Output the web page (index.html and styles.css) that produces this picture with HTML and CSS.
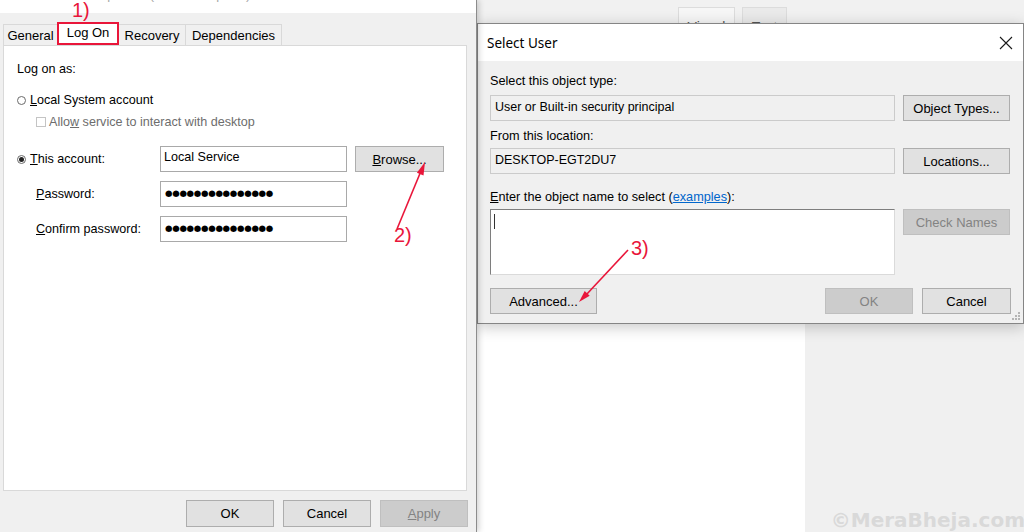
FILE: index.html
```html
<!DOCTYPE html>
<html lang="en">
<head>
<meta charset="utf-8">
<title>Log On - Select User</title>
<link rel="stylesheet" href="styles.css">
</head>
<body>
<div class="screen">
  <section class="svc-win">
    <div class="svc-title"><span>Service Properties (Local Computer)</span></div>
    <div class="tabs">
      <div class="tab t-general">General</div>
      <div class="tab t-logon active">Log On</div>
      <div class="tab t-recovery">Recovery</div>
      <div class="tab t-deps">Dependencies</div>
    </div>
    <div class="panel">
      <div class="logon-label">Log on as:</div>
      <div class="opt-row"><span class="radio"></span><span><u>L</u>ocal System account</span></div>
      <div class="chk-row"><span class="chk"></span><span>Allo<u>w</u> service to interact with desktop</span></div>
      <div class="form">
        <div class="f-label main"><span class="radio on"></span><span><u>T</u>his account:</span></div>
        <div class="field">Local Service</div>
        <div class="btn browse"><span><u>B</u>rowse...</span></div>
        <div class="f-label sub"><span><u>P</u>assword:</span></div>
        <div class="field pw">●●●●●●●●●●●●●●●</div>
        <div class="f-label sub"><span><u>C</u>onfirm password:</span></div>
        <div class="field pw">●●●●●●●●●●●●●●●</div>
      </div>
    </div>
    <div class="footer">
      <div class="btn w88">OK</div>
      <div class="btn w88">Cancel</div>
      <div class="btn w88 disabled"><span><u>A</u>pply</span></div>
    </div>
  </section>

  <section class="desk">
    <div class="editor-top">
      <span class="etab visual">Visual</span>
      <span class="etab text">Text</span>
    </div>
    <div class="dialog">
      <div class="dlg-title">
        <span>Select User</span>
        <svg class="close" width="14" height="14" viewBox="0 0 14 14"><path d="M1 1 L13 13 M13 1 L1 13" stroke="#1a1a1a" stroke-width="1.1" fill="none"/></svg>
      </div>
      <div class="dlg-body">
        <div class="lbl">Select this object type:</div>
        <div class="row r1">
          <div class="ro-field">User or Built-in security principal</div>
          <div class="btn w107">Object Types...</div>
        </div>
        <div class="lbl l2">From this location:</div>
        <div class="row r2">
          <div class="ro-field">DESKTOP-EGT2DU7</div>
          <div class="btn w107">Locations...</div>
        </div>
        <div class="lbl l3"><u>E</u>nter the object name to select (<a class="link">examples</a>):</div>
        <div class="name-row">
          <div class="name-box"><span class="caret"></span></div>
          <div class="btn w107 disabled">Check Names</div>
        </div>
        <div class="actions">
          <div class="btn w107">Advanced...</div>
          <div class="spacer"></div>
          <div class="btn w88 disabled">OK</div>
          <div class="btn w89">Cancel</div>
        </div>
      </div>
      <svg class="grip" width="8" height="8" viewBox="0 0 8 8"><g fill="#b5b5b5"><rect x="6" y="0" width="2" height="2"/><rect x="3" y="3" width="2" height="2"/><rect x="6" y="3" width="2" height="2"/><rect x="0" y="6" width="2" height="2"/><rect x="3" y="6" width="2" height="2"/><rect x="6" y="6" width="2" height="2"/></g></svg>
    </div>
    <div class="below">
      <div class="page"></div>
      <div class="side"><span class="wm">©MeraBheja.com</span></div>
    </div>
  </section>

  <div class="annot">
    <svg class="arrows" width="1024" height="532" viewBox="0 0 1024 532">
      <g stroke="#e9163a" stroke-width="1.6" fill="none">
        <line x1="397" y1="229" x2="421" y2="171"/>
        <line x1="628" y1="250" x2="586" y2="295"/>
      </g>
      <g fill="#e9163a">
        <polygon points="425,162 423.5,175.4 416.9,172.8"/>
        <polygon points="579,302 584.7,290.9 589.7,295.7"/>
      </g>
    </svg>
    <span class="num n1">1)</span>
    <span class="num n2">2)</span>
    <span class="num n3">3)</span>
  </div>
</div>
</body>
</html>
```
FILE: styles.css
```css
* { box-sizing: border-box; }
html, body { margin: 0; padding: 0; }
body {
  width: 1024px;
  height: 532px;
  overflow: hidden;
  font-family: "Liberation Sans", Arial, sans-serif;
  font-size: 13px;
  color: #000;
  background: #f0f0f0;
}
u { text-decoration: underline; text-underline-offset: 1px; }

.screen {
  position: relative;
  display: flex;
  width: 1024px;
  height: 532px;
}

/* ---------- left: service properties window ---------- */
.svc-win {
  width: 477px;
  flex: none;
  display: flex;
  flex-direction: column;
  background: #f0f0f0;
  border-right: 1px solid #8c8c8c;
  box-shadow: 2px 0 6px rgba(0, 0, 0, 0.18);
  position: relative;
  z-index: 2;
}
.svc-title {
  height: 13px;
  background: #fff;
  overflow: hidden;
  padding-left: 40px;
}
.svc-title span {
  display: block;
  margin-top: -14px;
  line-height: 18px;
  color: #a8a8a8;
  font-size: 13px;
  white-space: nowrap;
}
.tabs {
  height: 32px;
  display: flex;
  align-items: flex-end;
  padding-left: 3px;
}
.tab {
  height: 21px;
  border: 1px solid #d9d9d9;
  border-bottom: none;
  background: #f0f0f0;
  display: flex;
  align-items: center;
  justify-content: center;
  margin-right: -1px;
  white-space: nowrap;
}
.t-general { width: 55px; }
.t-logon { width: 62px; }
.t-recovery { width: 68px; }
.t-deps { width: 97px; }
.tab.active {
  height: 23px;
  background: #fff;
  border: 2px solid #e9163a;
  position: relative;
  z-index: 1;
  padding-bottom: 2px;
}
.panel {
  margin-left: 3px;
  width: 464px;
  height: 446px;
  flex: none;
  background: #fff;
  border: 1px solid #d9d9d9;
  padding: 15px 0 0 13px;
  font-size: 12.6px;
}
.logon-label { line-height: 16px; }
.opt-row {
  margin-top: 15px;
  height: 16px;
  display: flex;
  align-items: center;
  gap: 4px;
}
.radio {
  width: 9px;
  height: 9px;
  border: 1px solid #6a6a6a;
  border-radius: 50%;
  flex: none;
  display: flex;
  align-items: center;
  justify-content: center;
}
.radio.on::after {
  content: "";
  width: 5px;
  height: 5px;
  border-radius: 50%;
  background: #222;
}
.chk-row {
  margin-top: 6px;
  height: 16px;
  display: flex;
  align-items: center;
  gap: 3px;
  padding-left: 19px;
  color: #6d6d6d;
}
.chk {
  width: 10px;
  height: 10px;
  border: 1px solid #c4c4c4;
  flex: none;
}
.form {
  margin-top: 16px;
  display: grid;
  grid-template-columns: 135px 187px 89px;
  grid-auto-rows: 26px;
  column-gap: 8px;
  row-gap: 9px;
}
.f-label {
  grid-column: 1;
  display: flex;
  align-items: center;
  gap: 4px;
  white-space: nowrap;
}
.form .field { grid-column: 2; }
.form .browse { grid-column: 3; grid-row: 1; font-size: 13px; }
.f-label.sub { padding-left: 19px; }
.field {
  background: #fff;
  border: 1px solid #a9a9a9;
  padding: 0 3px;
  line-height: 21px;
  white-space: nowrap;
  overflow: hidden;
}
.field.pw {
  font-family: "DejaVu Sans", sans-serif;
  font-size: 8.6px;
  line-height: 23px;
  letter-spacing: -0.3px;
  padding-left: 4px;
}

.btn {
  height: 26px;
  background: #e1e1e1;
  border: 1px solid #adadad;
  display: flex;
  align-items: center;
  justify-content: center;
  white-space: nowrap;
  flex: none;
}
.btn.disabled {
  background: #cccccc;
  border-color: #bfbfbf;
  color: #838383;
}
.w88 { width: 88px; }
.w89 { width: 89px; }
.w107 { width: 107px; }

.footer {
  display: flex;
  justify-content: flex-end;
  gap: 9px;
  padding: 9px 8px 0 0;
}
.footer .btn { height: 27px; }

/* ---------- right: desktop with dialog ---------- */
.desk {
  flex: 1;
  min-width: 0;
  display: flex;
  flex-direction: column;
}
.editor-top {
  height: 23px;
  flex: none;
  display: flex;
  gap: 7px;
  padding: 7px 0 0 201px;
  overflow: hidden;
  background: #f1f1f1;
}
.etab {
  height: 26px;
  border: 1px solid #dcdcdc;
  font-size: 14px;
  color: #555;
  line-height: 38px;
  text-align: center;
}
.etab.visual { width: 57px; background: #f6f6f6; }
.etab.text { width: 45px; background: #eaeaea; }

.dialog {
  height: 301px;
  flex: none;
  border: 1px solid #858585;
  background: #f0f0f0;
  display: flex;
  flex-direction: column;
  box-shadow: 0 3px 14px rgba(0, 0, 0, 0.22);
  position: relative;
  z-index: 1;
}
.dlg-title {
  height: 37px;
  flex: none;
  background: #fff;
  display: flex;
  align-items: center;
  justify-content: space-between;
  padding: 0 10px 0 9px;
  font-family: "Noto Sans", "Liberation Sans", sans-serif;
  font-size: 13.5px;
}
.close { display: block; }
.dlg-body {
  flex: 1;
  padding: 12px 12px 0 12px;
  display: flex;
  flex-direction: column;
}
.lbl { line-height: 16px; white-space: nowrap; font-size: 12.7px; }
.row {
  display: flex;
  gap: 8px;
  height: 26px;
}
.r1 { margin-top: 6px; }
.l2 { margin-top: 7px; }
.r2 { margin-top: 4px; }
.l3 { margin-top: 15px; }
.ro-field {
  width: 405px;
  border: 1px solid #cbcbcb;
  background: #f0f0f0;
  padding: 0 4px;
  line-height: 22px;
  white-space: nowrap;
  font-size: 12.5px;
}
.link { color: #0066cc; text-decoration: underline; }
.name-row {
  margin-top: 4px;
  display: flex;
  align-items: flex-start;
  gap: 8px;
}
.name-box {
  width: 405px;
  height: 66px;
  background: #fff;
  border: 1px solid;
  border-color: #7e7e7e #dadada #dadada #7e7e7e;
  padding: 4px 0 0 3px;
}
.caret {
  display: block;
  width: 1px;
  height: 15px;
  background: #333;
}
.actions {
  margin-top: 13px;
  display: flex;
  gap: 9px;
}
.spacer { flex: 1; }
.grip {
  position: absolute;
  right: 3px;
  bottom: 3px;
}

.below {
  flex: 1;
  display: flex;
}
.page {
  width: 328px;
  background: #fff;
}
.side {
  flex: 1;
  background: #f0f0f0;
  display: flex;
  justify-content: flex-end;
  align-items: flex-end;
  overflow: hidden;
}
.wm {
  font-family: "DejaVu Sans", sans-serif;
  font-weight: bold;
  font-size: 20px;
  line-height: 22px;
  color: #d9d9d9;
  white-space: nowrap;
  margin-right: -1px;
  margin-bottom: 1px;
}

/* ---------- annotations ---------- */
.annot {
  position: absolute;
  left: 0;
  top: 0;
  width: 1024px;
  height: 532px;
  pointer-events: none;
  z-index: 10;
}
.arrows { position: absolute; left: 0; top: 0; }
.num {
  position: absolute;
  font-family: "Liberation Sans", Arial, sans-serif;
  font-size: 20px;
  line-height: 20px;
  color: #e9163a;
}
.n1 { left: 72px; top: 0; }
.n2 { left: 394px; top: 225px; }
.n3 { left: 631px; top: 238px; }
```
